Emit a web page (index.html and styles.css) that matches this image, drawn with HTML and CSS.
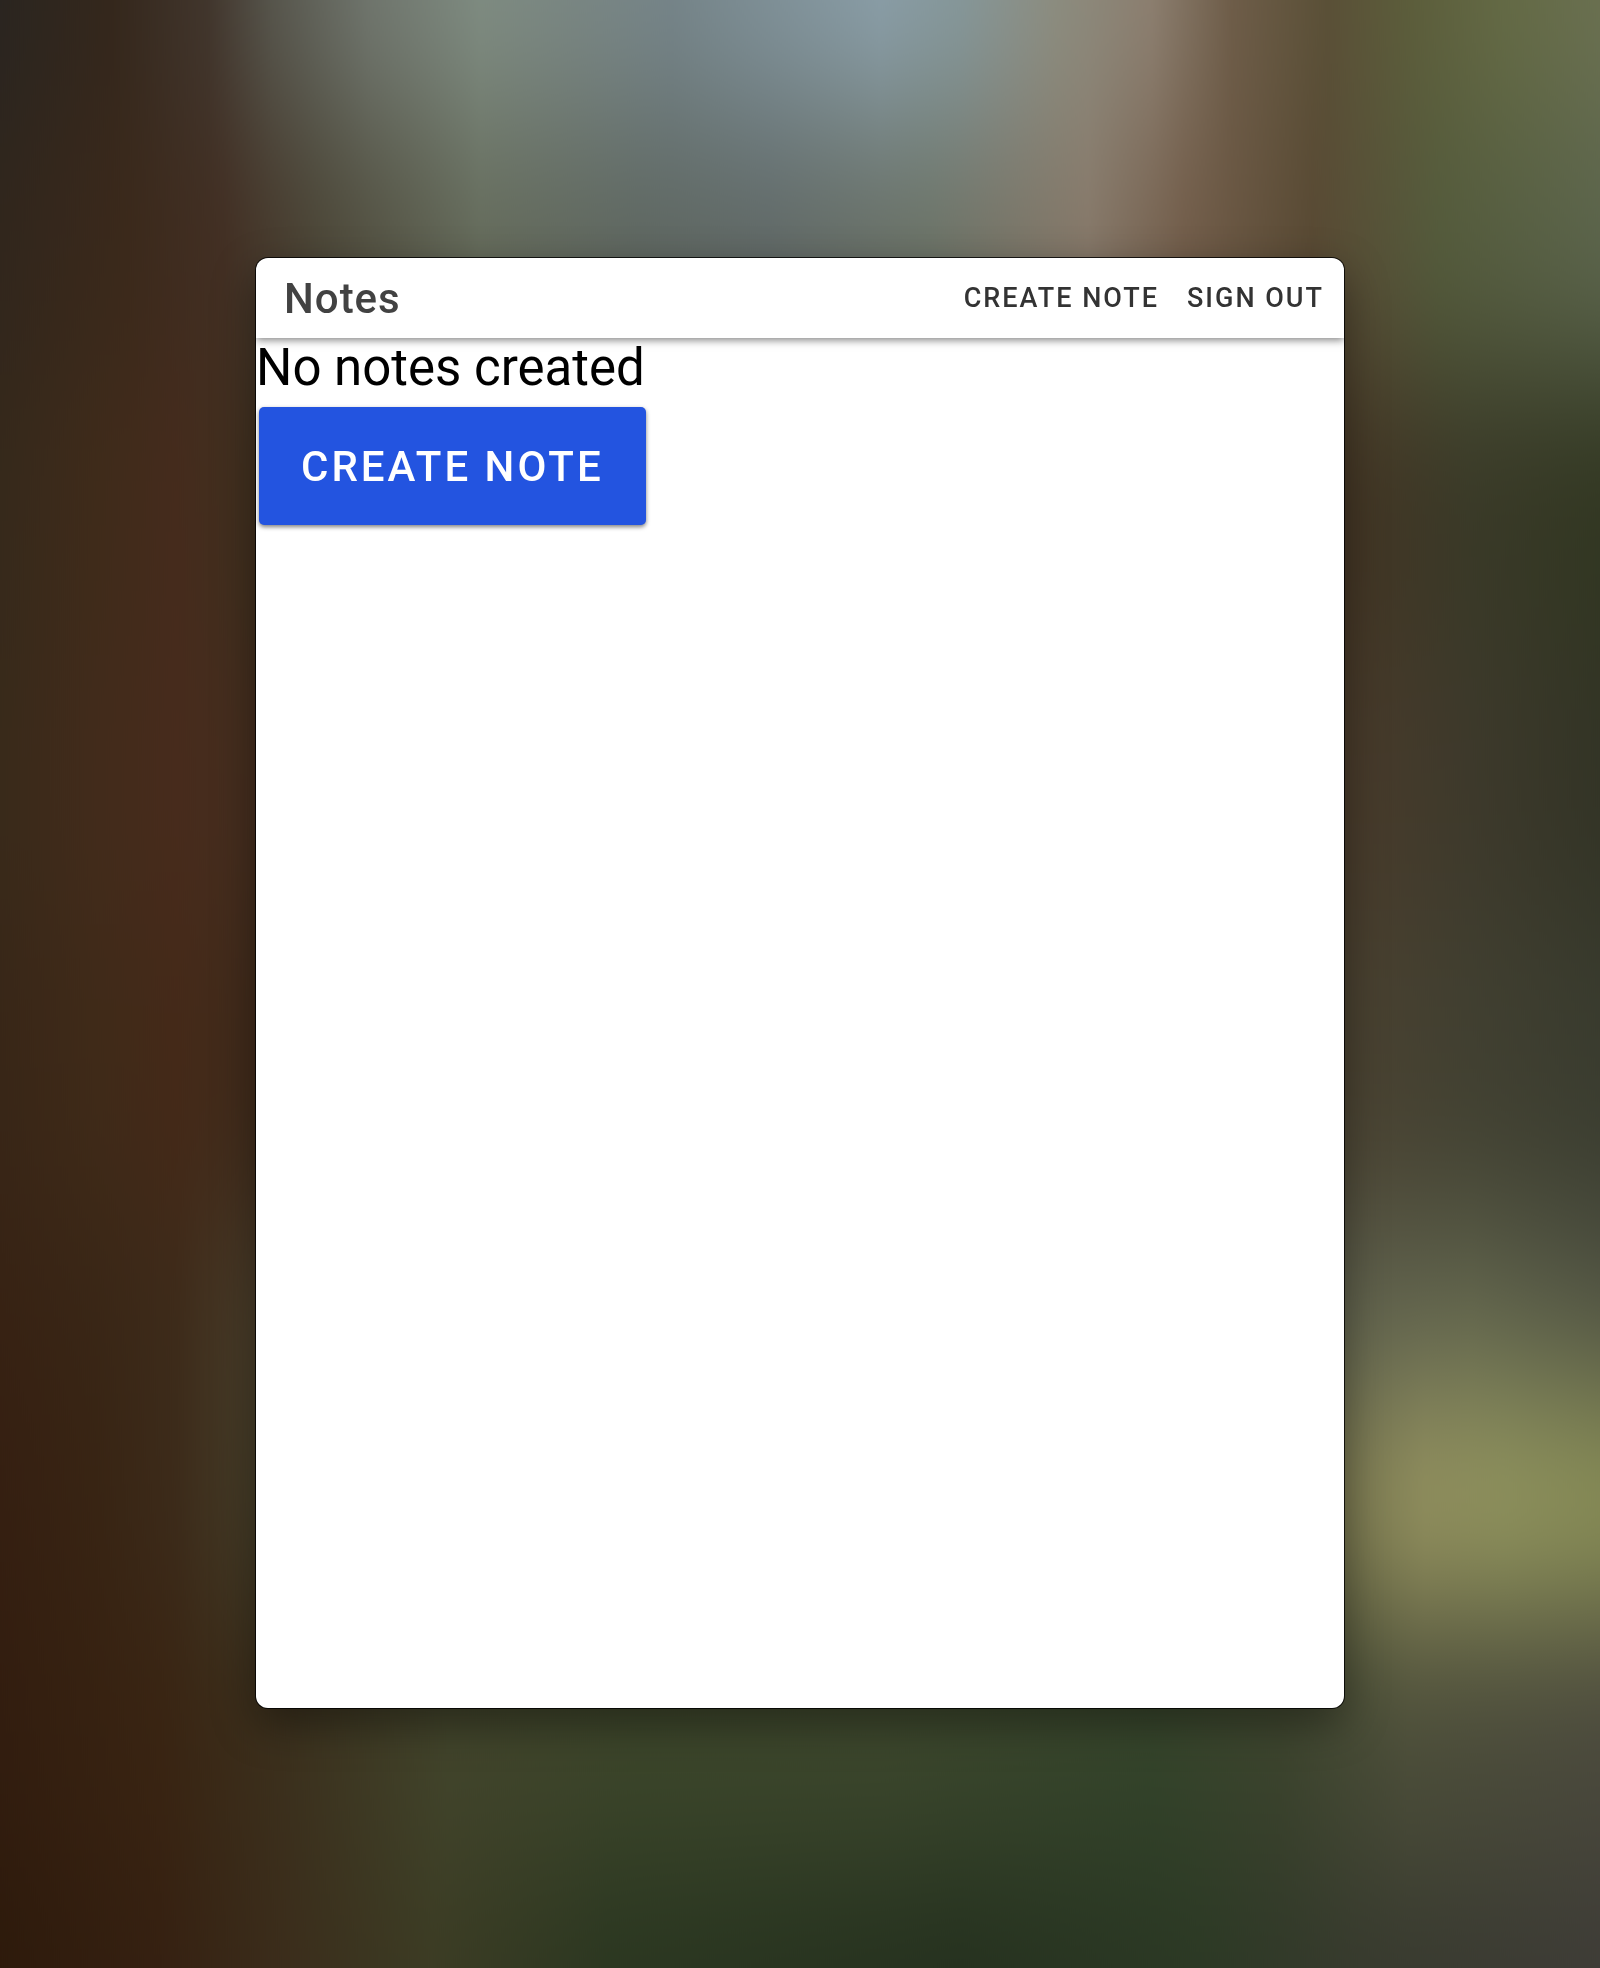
FILE: index.html
```html
<!DOCTYPE html>
<html lang="en">

<head>
    <meta charset="UTF-8">
    <meta name="viewport" content="width=device-width, initial-scale=1.0">
    <title>Notes</title>
    <link rel="stylesheet" href="styles.css">
</head>

<body>
    <!-- Blurred backdrop: one horizontal gradient per band, blended vertically -->
    <svg class="backdrop" viewBox="0 0 100 100" preserveAspectRatio="none" aria-hidden="true">
        <defs>
            <filter id="blend" filterUnits="userSpaceOnUse" x="0" y="-20" width="100" height="140" color-interpolation-filters="sRGB">
                <feGaussianBlur stdDeviation="0 4" />
            </filter>
            <linearGradient id="band1">
                <stop offset="0" stop-color="#2a2520" />
                <stop offset=".07" stop-color="#34271c" />
                <stop offset=".13" stop-color="#41362d" />
                <stop offset=".17" stop-color="#57564d" />
                <stop offset=".23" stop-color="#70766e" />
                <stop offset=".3" stop-color="#7f8c82" />
                <stop offset=".36" stop-color="#7a8784" />
                <stop offset=".42" stop-color="#76858a" />
                <stop offset=".55" stop-color="#8a9ea8" />
                <stop offset=".6" stop-color="#86989b" />
                <stop offset=".66" stop-color="#8c8d80" />
                <stop offset=".72" stop-color="#8c7f70" />
                <stop offset=".77" stop-color="#6e5d49" />
                <stop offset=".83" stop-color="#5a5037" />
                <stop offset=".88" stop-color="#5c5d3b" />
                <stop offset=".94" stop-color="#646a45" />
                <stop offset="1" stop-color="#6a7050" />
            </linearGradient>
            <linearGradient id="band2">
                <stop offset="0" stop-color="#31261c" />
                <stop offset=".08" stop-color="#3b291b" />
                <stop offset=".14" stop-color="#422f23" />
                <stop offset=".2" stop-color="#4c4738" />
                <stop offset=".3" stop-color="#656c5c" />
                <stop offset=".4" stop-color="#5f6862" />
                <stop offset=".48" stop-color="#616a68" />
                <stop offset=".58" stop-color="#6c7468" />
                <stop offset=".68" stop-color="#87796a" />
                <stop offset=".74" stop-color="#735e4b" />
                <stop offset=".82" stop-color="#594a34" />
                <stop offset=".9" stop-color="#545b3c" />
                <stop offset="1" stop-color="#5b644b" />
            </linearGradient>
            <linearGradient id="band3">
                <stop offset="0" stop-color="#36291b" />
                <stop offset=".06" stop-color="#3f2b1a" />
                <stop offset=".11" stop-color="#452b1c" />
                <stop offset=".16" stop-color="#40301f" />
                <stop offset=".84" stop-color="#433524" />
                <stop offset=".92" stop-color="#393927" />
                <stop offset="1" stop-color="#323722" />
            </linearGradient>
            <linearGradient id="band4">
                <stop offset="0" stop-color="#392a1a" />
                <stop offset=".06" stop-color="#422b1b" />
                <stop offset=".11" stop-color="#472b1c" />
                <stop offset=".16" stop-color="#452e1f" />
                <stop offset=".84" stop-color="#493b2b" />
                <stop offset=".92" stop-color="#3d392b" />
                <stop offset="1" stop-color="#333426" />
            </linearGradient>
            <linearGradient id="band5">
                <stop offset="0" stop-color="#382617" />
                <stop offset=".06" stop-color="#3f2a18" />
                <stop offset=".11" stop-color="#442918" />
                <stop offset=".16" stop-color="#402b1b" />
                <stop offset=".84" stop-color="#4a4231" />
                <stop offset=".92" stop-color="#414031" />
                <stop offset="1" stop-color="#3a3c2f" />
            </linearGradient>
            <linearGradient id="band6">
                <stop offset="0" stop-color="#372213" />
                <stop offset=".06" stop-color="#392616" />
                <stop offset=".11" stop-color="#3d2b1a" />
                <stop offset=".16" stop-color="#4a3e2b" />
                <stop offset=".84" stop-color="#5f624f" />
                <stop offset=".92" stop-color="#61654e" />
                <stop offset="1" stop-color="#545746" />
            </linearGradient>
            <linearGradient id="band7">
                <stop offset="0" stop-color="#351f11" />
                <stop offset=".06" stop-color="#382413" />
                <stop offset=".11" stop-color="#3c2b1a" />
                <stop offset=".16" stop-color="#453d28" />
                <stop offset=".84" stop-color="#7f7c52" />
                <stop offset=".89" stop-color="#95935f" />
                <stop offset=".94" stop-color="#93965e" />
                <stop offset="1" stop-color="#8c9158" />
            </linearGradient>
            <linearGradient id="band8">
                <stop offset="0" stop-color="#321d0f" />
                <stop offset=".1" stop-color="#392412" />
                <stop offset=".18" stop-color="#3b301d" />
                <stop offset=".28" stop-color="#41442b" />
                <stop offset=".4" stop-color="#3b452a" />
                <stop offset=".55" stop-color="#3b462c" />
                <stop offset=".72" stop-color="#33432a" />
                <stop offset=".8" stop-color="#3b432d" />
                <stop offset=".88" stop-color="#4b4d39" />
                <stop offset="1" stop-color="#4a493c" />
            </linearGradient>
            <linearGradient id="band9">
                <stop offset="0" stop-color="#2d1a0b" />
                <stop offset=".1" stop-color="#352011" />
                <stop offset=".18" stop-color="#3b2d1b" />
                <stop offset=".27" stop-color="#3b3b23" />
                <stop offset=".38" stop-color="#2a3620" />
                <stop offset=".6" stop-color="#24301e" />
                <stop offset=".75" stop-color="#2b3824" />
                <stop offset=".85" stop-color="#36392d" />
                <stop offset="1" stop-color="#3d3b36" />
            </linearGradient>
        </defs>
        <g filter="url(#blend)">
            <rect y="-20" width="100" height="26" fill="url(#band1)" />
            <rect y="6" width="100" height="13" fill="url(#band2)" />
            <rect y="19" width="100" height="14" fill="url(#band3)" />
            <rect y="33" width="100" height="14" fill="url(#band4)" />
            <rect y="47" width="100" height="15" fill="url(#band5)" />
            <rect y="62" width="100" height="9" fill="url(#band6)" />
            <rect y="71" width="100" height="11" fill="url(#band7)" />
            <rect y="82" width="100" height="13" fill="url(#band8)" />
            <rect y="95" width="100" height="25" fill="url(#band9)" />
        </g>
    </svg>

    <div class="window">
        <header class="toolbar">
            <h1>Notes</h1>
            <nav>
                <a href="#create">Create Note</a>
                <a href="#signout">Sign Out</a>
            </nav>
        </header>
        <main>
            <p>No notes created</p>
            <button type="button" class="btn">Create Note</button>
        </main>
    </div>
</body>

</html>
```

FILE: styles.css
```css
* {
    margin: 0;
    padding: 0;
    box-sizing: border-box;
    font-family: 'Roboto', sans-serif;
}

body {
    min-height: 100vh;
    display: flex;
    justify-content: center;
    padding: 258px 16% 260px;
    background: #3b2818;
}

.backdrop {
    position: fixed;
    top: 0;
    left: 0;
    width: 100%;
    height: 100%;
    z-index: -1;
}

/* App window */
.window {
    flex: 1;
    display: flex;
    flex-direction: column;
    background: #fff;
    border-radius: 12px;
    overflow: hidden;
    box-shadow: 0 0 0 1px rgba(0, 0, 0, 0.8), 0 16px 44px rgba(0, 0, 0, 0.4);
}

.toolbar {
    display: flex;
    align-items: center;
    justify-content: space-between;
    height: 80px;
    padding: 0 20px 0 28px;
    box-shadow: 0 2px 8px rgba(0, 0, 0, 0.5);
}

.toolbar h1 {
    font-size: 42px;
    font-weight: 500;
    letter-spacing: 1px;
    color: #424242;
}

.toolbar nav {
    display: flex;
    gap: 28px;
}

.toolbar a {
    font-size: 27px;
    font-weight: 500;
    letter-spacing: 2px;
    text-transform: uppercase;
    text-decoration: none;
    color: #333;
}

main p {
    font-size: 51px;
    line-height: 60px;
    color: #000;
}

/* Button */
.btn {
    margin: 9px 3px;
    padding: 0 42px;
    height: 118px;
    font-size: 42px;
    font-weight: 500;
    letter-spacing: 3px;
    text-transform: uppercase;
    color: #fff;
    background: #2354e0;
    border: none;
    border-radius: 5px;
    box-shadow: 0 2px 4px rgba(0, 0, 0, 0.5);
    cursor: pointer;
}
```
